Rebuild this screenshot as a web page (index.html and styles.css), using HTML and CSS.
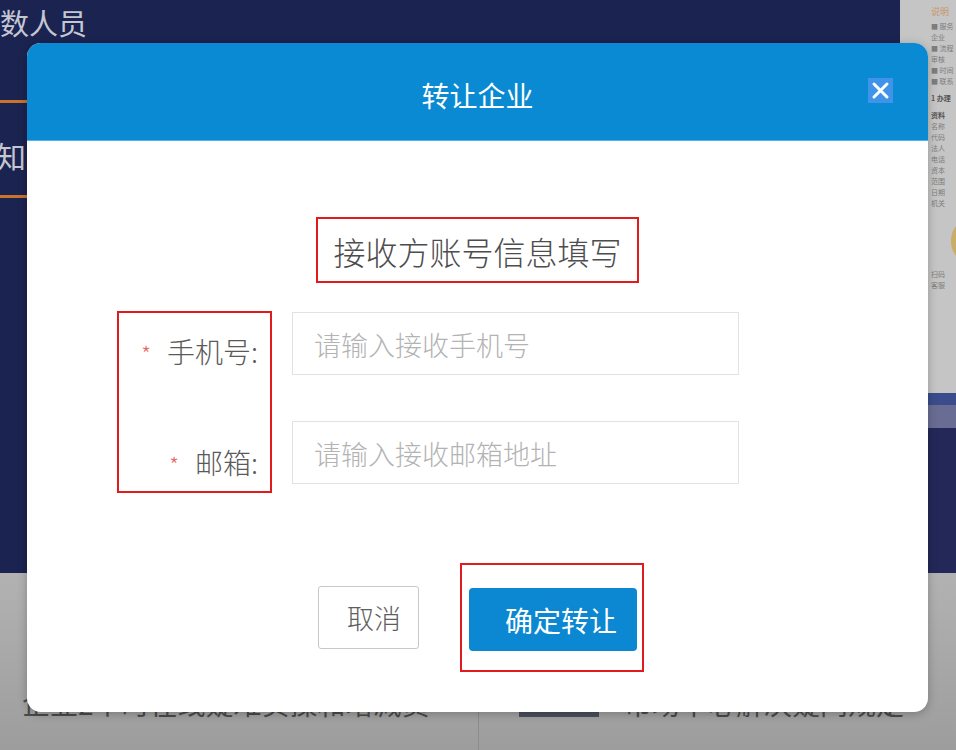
FILE: index.html
```html
<!DOCTYPE html>
<html lang="zh-CN">
<head>
<meta charset="utf-8">
<title>转让企业</title>
<link rel="stylesheet" href="styles.css">
</head>
<body>
<div class="page">
  <div class="top">
    <div class="hero">
      <div class="hero-title">数人员</div>
      <div class="hero-line"></div>
      <div class="hero-sub">知</div>
      <div class="hero-line"></div>
    </div>
    <div class="side">
      <div class="side-doc">
        <p class="doc-head">说明</p>
        <p>■ 服务</p>
        <p>企业</p>
        <p>■ 流程</p>
        <p>审核</p>
        <p>■ 时间</p>
        <p>■ 联系</p>
        <p class="doc-bold">1 办理</p>
        <p class="doc-bold">资料</p>
        <p>名称</p>
        <p>代码</p>
        <p>法人</p>
        <p>电话</p>
        <p>资本</p>
        <p>范围</p>
        <p>日期</p>
        <p>机关</p>
        <div class="doc-circle"></div>
        <p>扫码</p>
        <p>客服</p>
      </div>
      <div class="side-band"></div>
      <div class="side-navy"></div>
    </div>
  </div>
  <div class="bottom">
    <div class="bottom-col bottom-left">企业2个时在线疑难实操和增减员</div>
    <div class="bottom-col bottom-right"><span class="thumb"></span>市场中心解决疑问规定</div>
  </div>
</div>

<div class="modal">
  <div class="modal-header">
    <div class="modal-title">转让企业</div>
    <button class="close" type="button" aria-label="关闭">
      <svg width="25" height="25" viewBox="0 0 25 25"><path d="M6 6 L19 19 M19 6 L6 19" stroke="#fff" stroke-width="3" stroke-linecap="round"/></svg>
    </button>
  </div>
  <div class="modal-body">
    <div class="section-title">接收方账号信息填写</div>
    <div class="form">
      <div class="labels">
        <div class="label"><span class="req">*</span>手机号:</div>
        <div class="label"><span class="req">*</span>邮箱:</div>
      </div>
      <div class="inputs">
        <input class="field" type="text" placeholder="请输入接收手机号">
        <input class="field" type="text" placeholder="请输入接收邮箱地址">
      </div>
    </div>
    <div class="actions">
      <button class="btn-cancel" type="button">取消</button>
      <div class="confirm-wrap">
        <button class="btn-confirm" type="button">确定转让</button>
      </div>
    </div>
  </div>
</div>
</body>
</html>
```

FILE: styles.css
```css
html, body {
  margin: 0;
  padding: 0;
}
body {
  width: 956px;
  height: 750px;
  overflow: hidden;
  position: relative;
  font-family: "Noto Sans CJK SC", "Noto Sans", sans-serif;
  background: #a8a8a8;
}
.page {
  width: 956px;
  height: 750px;
  display: flex;
  flex-direction: column;
}
.top {
  height: 573px;
  display: flex;
}
.hero {
  flex: 0 0 900px;
  width: 900px;
  background: #1b2350;
  color: #c4c7d3;
  overflow: hidden;
}
.hero-title {
  font-size: 29px;
  line-height: 40px;
  margin-left: 0;
  margin-top: 2px;
  white-space: nowrap;
}
.hero-line {
  width: 60px;
  height: 3px;
  background: #c8742d;
  margin-top: 58px;
}
.hero-sub {
  font-size: 30px;
  line-height: 36px;
  margin-top: 34px;
  margin-left: -4px;
}
.hero-sub + .hero-line {
  margin-top: 22px;
}
.side {
  flex: 0 0 56px;
  width: 56px;
  min-width: 0;
  display: flex;
  flex-direction: column;
}
.side-doc {
  height: 393px;
  background: #c5c5c5;
  padding: 6px 0 0 31px;
  box-sizing: border-box;
  overflow: hidden;
  font-size: 7px;
  line-height: 11px;
  color: #7d7d7d;
  white-space: nowrap;
}
.side-doc p {
  margin: 0;
}
.doc-head {
  color: #c9966d;
  font-size: 9px;
  margin-bottom: 4px !important;
}
.doc-bold {
  color: #555;
  font-weight: 700;
  margin-top: 6px !important;
}
.doc-circle {
  width: 24px;
  height: 36px;
  border-radius: 50%;
  background: #c9ae6a;
  margin: 14px 0 10px 20px;
}
.side-band {
  height: 35px;
  background: linear-gradient(180deg, #3a4c8c 0 35%, #696d93 35% 100%);
}
.side-navy {
  flex: 1;
  background: #232859;
}
.bottom {
  flex: 1;
  display: flex;
  background: linear-gradient(180deg, #b2b2b2, #9d9d9d);
}
.bottom-col {
  padding-top: 112px;
  font-size: 28px;
  line-height: 36px;
  color: #4a4a4a;
  white-space: nowrap;
  overflow: hidden;
}
.bottom-left {
  width: 479px;
  padding-left: 22px;
  box-sizing: border-box;
  border-right: 1px solid #8c8c8c;
}
.bottom-right {
  flex: 1;
  padding-left: 40px;
  display: flex;
  align-items: flex-start;
  min-width: 0;
}
.thumb {
  width: 80px;
  height: 14px;
  background: #4a4f5c;
  margin: 18px 25px 0 0;
  flex: none;
}

/* modal */
.modal {
  position: absolute;
  left: 27px;
  top: 43px;
  width: 901px;
  height: 669px;
  background: #fff;
  border-radius: 14px;
  overflow: hidden;
  box-shadow: 0 2px 10px rgba(0, 0, 0, 0.25);
}
.modal-header {
  height: 97px;
  background: #0a8ad2;
  border-bottom: 1px solid #52b1e6;
  display: grid;
  grid-template-columns: 1fr auto 1fr;
  align-items: center;
}
.modal-title {
  grid-column: 2;
  color: #fff;
  font-size: 28px;
  line-height: 40px;
  padding-top: 6px;
}
.close {
  grid-column: 3;
  justify-self: end;
  margin-right: 35px;
  width: 25px;
  height: 25px;
  padding: 0;
  border: 0;
  background: #3f93e9;
  display: flex;
  align-items: center;
  justify-content: center;
  margin-top: -3px;
}
.close svg {
  display: block;
}
.modal-body {
  display: flex;
  flex-direction: column;
}
.section-title {
  align-self: center;
  margin-top: 76px;
  width: 323px;
  height: 66px;
  box-sizing: border-box;
  border: 2px solid #e11b1b;
  display: flex;
  align-items: center;
  justify-content: center;
  font-size: 32px;
  font-weight: 300;
  color: #4d4d4d;
  padding-top: 2px;
}
.form {
  display: flex;
  margin-top: 28px;
  margin-left: 90px;
}
.labels {
  width: 155px;
  height: 182px;
  box-sizing: border-box;
  border: 2px solid #e11b1b;
  display: flex;
  flex-direction: column;
  align-items: flex-end;
  padding: 16px 12px 0 0;
  gap: 67px;
}
.label {
  font-size: 28px;
  font-weight: 300;
  line-height: 40px;
  color: #5a5a5a;
  display: flex;
  align-items: center;
}
.req {
  color: #e46a6a;
  font-size: 22px;
  margin-right: 16px;
  padding-top: 4px;
}
.inputs {
  display: flex;
  flex-direction: column;
  gap: 46px;
  margin-left: 20px;
  margin-top: 1px;
}
.field {
  width: 447px;
  height: 63px;
  box-sizing: border-box;
  border: 1px solid #e2e2e2;
  padding: 2px 0 0 21px;
  margin: 0;
  font-family: "Noto Sans CJK SC", "Noto Sans", sans-serif;
  font-size: 27px;
  font-weight: 300;
  color: #333;
  outline: none;
  background: #fff;
}
.field::placeholder {
  color: #b3b3b3;
}
.actions {
  display: flex;
  justify-content: center;
  align-items: center;
  gap: 41px;
  margin-top: 70px;
  margin-left: 7px;
}
.btn-cancel {
  width: 101px;
  height: 63px;
  box-sizing: border-box;
  border: 1px solid #c8c8c8;
  border-radius: 3px;
  background: #fff;
  font-family: "Noto Sans CJK SC", "Noto Sans", sans-serif;
  font-size: 27px;
  font-weight: 300;
  color: #5e5e5e;
  padding: 0 0 0 28px;
  text-align: left;
}
.confirm-wrap {
  border: 2px solid #e11b1b;
  padding: 23px 5px 19px 7px;
}
.btn-confirm {
  display: block;
  width: 168px;
  height: 63px;
  border: 0;
  border-radius: 4px;
  background: #0b88d1;
  color: #fff;
  font-family: "Noto Sans CJK SC", "Noto Sans", sans-serif;
  font-size: 28px;
  padding: 0 0 0 16px;
}
```
